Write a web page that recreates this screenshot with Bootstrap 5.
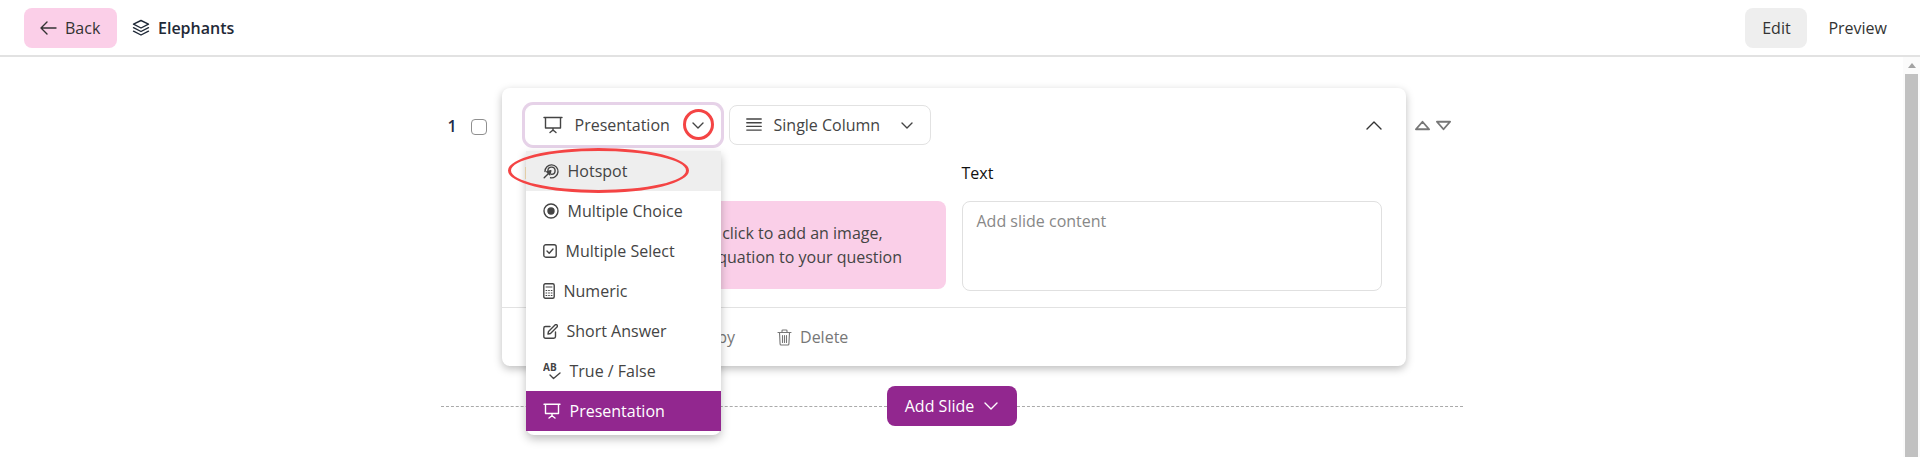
<!DOCTYPE html>
<html lang="en">
<head>
  <meta charset="UTF-8" />
  <meta name="viewport" content="width=device-width, initial-scale=1.0"/>
  <title>Elephants - Edit</title>
  <link href="https://cdn.jsdelivr.net/npm/bootstrap@5.3.3/dist/css/bootstrap.min.css" rel="stylesheet"/>
  <style>
    html, body { height: 457px; overflow: hidden; }
    body { font-family: "Open Sans", sans-serif; font-size: 16px; color: #333; background: #fff; }
    .ico { fill: none; stroke: currentColor; stroke-width: 1.4; stroke-linecap: round; stroke-linejoin: round; flex: none; }

    /* top bar */
    .topbar { height: 57px; border-bottom: 2px solid #e2e2e2; padding: 0 17px 0 24px; }
    .btn-plain { height: 40px; border: 0; border-radius: 8px; font-size: 16px; color: #333; padding: 0 16px; display: inline-flex; align-items: center; gap: 8px; }
    .btn-pink { background: #fbcfe8; width: 93px; }
    .btn-pink:hover { background: #fbcfe8; }
    .btn-grey { background: #eee; width: 62px; justify-content: center; }
    .deck-title { font-weight: 600; color: #1f2937; margin-left: 15px; gap: 8px; }
    .preview-link { margin-left: 5px; }

    /* page */
    .stage { height: 400px; }
    .slides { width: 1022px; padding-top: 31px; }
    .gutter { width: 61px; padding: 31px 0 0 7px; gap: 14px; height: 70px; }
    .slide-no { font-weight: 600; color: #1e2a4a; font-size: 16px; line-height: 14px; }
    .tick { width: 16px; height: 16px; border: 1px solid #8f8f8f; border-radius: 3px; margin: 0; }
    .slide-box { width: 904px; border-radius: 8px; box-shadow: 0 3px 9px rgba(0,0,0,.26); height: 278px; }
    .slide-head { padding: 17px 24px 0 23px; }
    .picker { height: 40px; border: 1px solid #e2e2e2; border-radius: 8px; background: #fff; font-size: 16px; color: #444; display: flex; align-items: center; }
    .picker-type { width: 196px; box-shadow: 0 0 0 3px #e6d2e8; border-color: #fff; padding: 0 12px 0 17px; }
    .picker-layout { width: 202px; margin-left: 8px; padding: 0 17px 0 16px; }
    .type-wrap { width: 196px; }
    .type-menu { display: block; top: 46px; left: 1px; width: 195px; min-width: 0; padding: 0 0 4px; border: 0; border-radius: 0 0 8px 8px; box-shadow: 0 4px 10px rgba(0,0,0,.25); font-size: 16px; z-index: 5; }
    .type-menu .dropdown-item { height: 40px; display: flex; align-items: center; gap: 9px; padding: 0 0 0 17px; color: #444; }
    .type-menu .item-on { background: #eee; }
    .type-menu .item-current, .type-menu .item-current:hover { background: #92278f; color: #fff; }

    .slide-fields { display: grid; grid-template-columns: 421px 420px; gap: 0 16px; padding: 0 24px 16px 23px; }
    .field-label { font-weight: 500; color: #111; line-height: 22px; margin: 17px 0 17px; }
    .drop-zone { height: 88px; margin-left: 2px; background: #facfe8; border-radius: 8px; line-height: 24px; text-align: center; padding-top: 20px; color: #444; }
    .text-field { height: 90px; border: 1px solid #e0e0e0; border-radius: 8px; padding: 7px 14px; color: #888; }
    .slide-foot { border-top: 1px solid #e2e2e2; height: 59px; padding-left: 196px; color: #777; gap: 42px; }
    .move-btns { padding: 32px 0 0 9px; gap: 6px; height: 60px; color: #777; }

    .add-row { margin-top: 20px; }
    .dash { border-top: 1px dashed #aaa; }
    .btn-add { width: 130px; height: 40px; background: #92278f; color: #fff; border: 0; border-radius: 8px; font-size: 16px; font-weight: 500; display: inline-flex; align-items: center; justify-content: center; gap: 10px; padding: 0; }
    .btn-add:hover { background: #92278f; color: #fff; }

    /* fake scrollbar */
    .scroll-rail { width: 17px; background: #fbfbfb; padding: 0 2px; flex: none; }
    .scroll-up { width: 0; height: 0; margin: 6px auto 6px; border: 4px solid transparent; border-top: 0; border-bottom: 5px solid #a3a3a3; }
    .scroll-thumb { height: 400px; background: #c1c1c1; }

    /* red call-outs on top of the screenshot */
    .mark-ring { position: absolute; border: 3px solid #f44444; pointer-events: none; z-index: 9; border-radius: 50%; }
    .mark-chevron { width: 31px; height: 31px; left: 158px; top: 4px; }
    .mark-hotspot { width: 181px; height: 45px; left: -17px; top: 43px; }
  </style>
</head>
<body>

  <header class="topbar d-flex align-items-center">
    <button class="btn btn-plain btn-pink">
      <svg class="ico" width="17" height="14" viewBox="0 0 17 14"><path d="M16 7H1.500M7 1 1 7l6 6"/></svg>
      Back
    </button>
    <div class="deck-title d-flex align-items-center">
      <svg class="ico" width="18" height="18" viewBox="0 0 18 18"><path d="M9 1.500 1.500 5.200 9 9l7.500-3.800zM1.500 8.700 9 12.500l7.500-3.800M1.500 12.200 9 16l7.500-3.800"/></svg>
      Elephants
    </div>
    <div class="ms-auto d-flex align-items-center">
      <button class="btn btn-plain btn-grey">Edit</button>
      <button class="btn btn-plain preview-link">Preview</button>
    </div>
  </header>

  <div class="stage d-flex">
    <main class="flex-grow-1">
      <div class="slides mx-auto">
        <div class="d-flex">
          <div class="gutter d-flex align-items-start">
            <span class="slide-no">1</span>
            <input class="tick form-check-input" type="checkbox">
          </div>

          <section class="slide-box bg-white">
            <div class="slide-head d-flex align-items-center">
              <div class="type-wrap position-relative">
                <div class="picker picker-type">
                  <svg class="ico" width="20" height="18" viewBox="0 0 20 18"><path d="M1 1.500h18M2.500 1.500v10.500h15V1.500M10 12v2.500M7 16.500l3-2.500 3 2.500"/></svg>
                  <span class="ms-2 ps-1">Presentation</span>
                  <svg class="ico ms-auto me-1" width="12" height="7" viewBox="0 0 12 7"><path d="m1 1 5 5 5-5"/></svg>
                </div>
                <span class="mark-ring mark-chevron"></span>
                <span class="mark-ring mark-hotspot"></span>

                <ul class="dropdown-menu show type-menu">
                  <li><a class="dropdown-item item-on" href="#">
                    <svg class="ico" width="16" height="16" viewBox="0 0 16 16"><path d="M2 8.500A6.500 6.500 0 1 1 7.500 14.800M4.900 7.500A3.600 3.600 0 1 1 8.500 11.300"/><path d="M1.200 14.800 6 10"/><path d="M7.800 7.800 3.800 8.800l3 3z" fill="currentColor"/></svg>
                    Hotspot</a></li>
                  <li><a class="dropdown-item" href="#">
                    <svg class="ico" width="16" height="16" viewBox="0 0 16 16"><circle cx="8" cy="8" r="7"/><circle cx="8" cy="8" r="3" fill="currentColor"/></svg>
                    Multiple Choice</a></li>
                  <li><a class="dropdown-item" href="#">
                    <svg class="ico" width="14" height="14" viewBox="0 0 14 14"><rect x=".8" y=".8" width="12.400" height="12.400" rx="2"/><path d="m4 7 2.200 2.200L10 5"/></svg>
                    Multiple Select</a></li>
                  <li><a class="dropdown-item" href="#">
                    <svg class="ico" width="12" height="16" viewBox="0 0 12 16"><rect x=".8" y=".8" width="10.400" height="14.400" rx="1.500"/><path d="M3 4h6M3 7.500h.8M5.600 7.500h.8M8.200 7.500H9M3 10h.8M5.600 10h.8M8.200 10H9M3 12.500h.8M5.600 12.500h.8M8.200 12.500H9" stroke-width="1"/></svg>
                    Numeric</a></li>
                  <li><a class="dropdown-item" href="#">
                    <svg class="ico" width="15" height="15" viewBox="0 0 15 15"><path d="M7 2.500H2.500A1.700 1.700 0 0 0 .8 4.200v8.300a1.700 1.700 0 0 0 1.700 1.700h8.300a1.700 1.700 0 0 0 1.700-1.700V8"/><path d="M5.500 7.500 12 1a1.400 1.400 0 0 1 2 2L7.500 9.500l-2.500.5z"/></svg>
                    Short Answer</a></li>
                  <li><a class="dropdown-item" href="#">
                    <svg width="18" height="17" viewBox="0 0 18 17" class="flex-shrink-0"><text x="0" y="8" font-family="Open Sans, sans-serif" font-size="10" font-weight="700" fill="currentColor">AB</text><path class="ico" d="m7 12 3.500 3.500L17 10"/></svg>
                    True / False</a></li>
                  <li><a class="dropdown-item item-current" href="#">
                    <svg class="ico" width="18" height="16" viewBox="0 0 18 16"><path d="M1 1.300h16M2.500 1.300v9.200h13V1.300M9 10.500v2.200M6 15l3-2.300 3 2.300"/></svg>
                    Presentation</a></li>
                </ul>
              </div>

              <div class="picker picker-layout">
                <svg class="ico" width="16" height="16" viewBox="0 0 16 16"><path d="M.8 2h14.400M.8 5.700h14.400M.8 9.400h14.400M.8 13.100h14.400"/></svg>
                <span class="ms-2 ps-1">Single Column</span>
                <svg class="ico ms-auto" width="12" height="7" viewBox="0 0 12 7"><path d="m1 1 5 5 5-5"/></svg>
              </div>

              <svg class="ico ms-auto" width="16" height="9" viewBox="0 0 16 9"><path d="m1 8 7-7 7 7"/></svg>
            </div>

            <div class="slide-fields">
              <div>
                <div class="field-label">Media</div>
                <div class="drop-zone">Drag and drop or click to add an image,<br>an audio, video or equation to your question</div>
              </div>
              <div>
                <div class="field-label">Text</div>
                <div class="text-field">Add slide content</div>
              </div>
            </div>

            <div class="slide-foot d-flex align-items-center">
              <span>Copy</span>
              <span class="d-inline-flex align-items-center gap-2">
                <svg class="ico" width="15" height="17" viewBox="0 0 15 17"><path d="M1 3.500h13M5 3.500V1.800A.8.800 0 0 1 5.800 1h3.400a.8.800 0 0 1 .8.800v1.700M2.500 3.500l.6 11.500a1 1 0 0 0 1 1h6.800a1 1 0 0 0 1-1l.6-11.500M5.500 6.500v7M7.500 6.500v7M9.500 6.500v7" stroke-width="1.100"/></svg>
                <span>Delete</span>
              </span>
            </div>
          </section>

          <div class="move-btns d-flex align-items-start">
            <svg class="ico" width="15" height="11" viewBox="0 0 16 11"><path d="M8 1.500 15 9.500H1z" stroke-width="2"/></svg>
            <svg class="ico" width="15" height="11" viewBox="0 0 16 11"><path d="M8 9.500 15 1.500H1z" stroke-width="2"/></svg>
          </div>
        </div>

        <div class="add-row d-flex align-items-center">
          <div class="dash flex-grow-1"></div>
          <button class="btn btn-add">Add Slide
            <svg class="ico" width="14" height="8" viewBox="0 0 14 8" stroke-width="1.800"><path d="m1 1 6 6 6-6"/></svg>
          </button>
          <div class="dash flex-grow-1"></div>
        </div>
      </div>
    </main>

    <div class="scroll-rail">
      <div class="scroll-up"></div>
      <div class="scroll-thumb"></div>
    </div>
  </div>

  <script src="https://cdn.jsdelivr.net/npm/bootstrap@5.3.3/dist/js/bootstrap.bundle.min.js"></script>
</body>
</html>
